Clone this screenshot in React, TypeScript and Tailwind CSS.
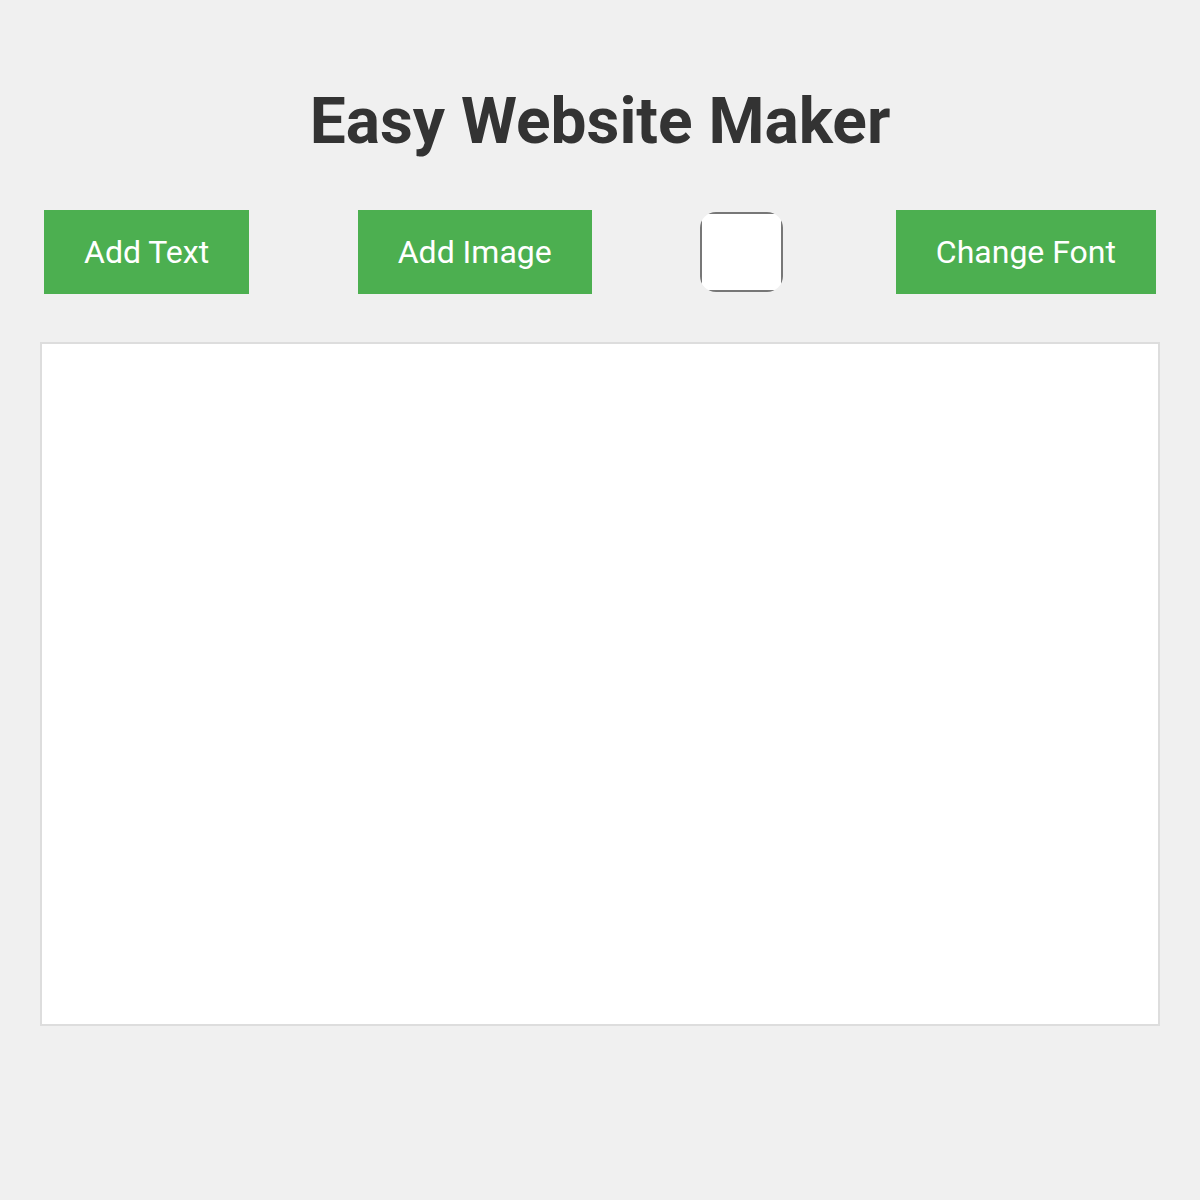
import React from "react";

const actions = ["Add Text", "Add Image", "Change Font"];

function ActionButton({ label }: { label: string }) {
  return (
    <button className="flex h-[84px] items-center bg-[#4caf50] px-10 text-[32px] text-white">
      {label}
    </button>
  );
}

// colour picker swatch: square border clipped by the rounded white face
function ColorSwatch() {
  return (
    <div className="relative mr-[4px] h-[80px] w-[83px] overflow-hidden rounded-[16px] bg-white">
      <div className="absolute inset-0 border-2 border-[#777]" />
    </div>
  );
}

export default function App() {
  return (
    <div className="min-h-[1200px] bg-[#f0f0f0] px-10 pt-[86px] font-['Roboto',sans-serif]">
      <h1 className="text-center text-[64px] font-bold leading-[72px] text-[#333]">Easy Website Maker</h1>

      <div className="mt-[52px] flex items-center justify-between px-1">
        <ActionButton label={actions[0]} />
        <ActionButton label={actions[1]} />
        <ColorSwatch />
        <ActionButton label={actions[2]} />
      </div>

      <div className="mt-[48px] h-[684px] border-2 border-[#ddd] bg-white" />
    </div>
  );
}
